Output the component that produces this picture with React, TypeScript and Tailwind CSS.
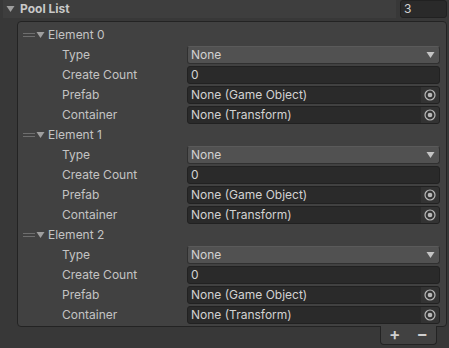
import React from 'react';

const font = { fontFamily: 'Inter, "Noto Sans", Arial, sans-serif' };

function Caret({ className }: { className?: string }) {
  return (
    <svg width="9" height="8" viewBox="0 0 9 8" className={className}>
      <path d="M0.5 1 L8.5 1 L4.5 7 Z" fill="currentColor" />
    </svg>
  );
}

function Handle() {
  return (
    <svg width="12" height="6" viewBox="0 0 12 6" className="text-[#6e6e6e]">
      <rect x="0" y="1" width="12" height="1" fill="currentColor" />
      <rect x="0" y="4" width="12" height="1" fill="currentColor" />
    </svg>
  );
}

function Target() {
  return (
    <svg width="12" height="12" viewBox="0 0 12 12" className="text-[#b8b8b8]">
      <circle cx="6" cy="6" r="5" fill="none" stroke="currentColor" strokeWidth="1.2" />
      <circle cx="6" cy="6" r="2.3" fill="currentColor" />
    </svg>
  );
}

function Dropdown({ value }: { value: string }) {
  return (
    <div className="flex-1 h-[18px] flex items-center justify-between rounded-[3px] border border-[#303030] border-t-[#5a5a5a] bg-[#515151] pl-[3px] pr-[4px] text-[#d2d2d2]">
      <span>{value}</span>
      <Caret className="text-[#c4c4c4]" />
    </div>
  );
}

function TextField({ value }: { value: string }) {
  return (
    <div className="flex-1 h-[18px] flex items-center rounded-[3px] border border-[#212121] bg-[#2a2a2a] pl-[3px] text-[#d2d2d2]">
      {value}
    </div>
  );
}

function ObjectField({ value }: { value: string }) {
  return (
    <div className="flex-1 h-[18px] flex items-center rounded-[3px] border border-[#212121] bg-[#2a2a2a] text-[#d2d2d2] overflow-hidden">
      <span className="flex-1 pl-[3px]">{value}</span>
      <div className="w-[18px] h-full flex items-center justify-center bg-[#333333]">
        <Target />
      </div>
    </div>
  );
}

function Prop({ label, children }: { label: string; children: React.ReactNode }) {
  return (
    <div className="h-5 flex items-center pr-[6px]">
      <span className="w-[125px] pl-[44px] box-content text-[#c4c4c4] shrink-0">{label}</span>
      {children}
    </div>
  );
}

function Element({ index }: { index: number }) {
  return (
    <div>
      <div className="h-5 flex items-center">
        <div className="ml-[5px] mr-[1px] flex items-center">
          <Handle />
        </div>
        <Caret className="text-[#9e9e9e]" />
        <span className="ml-[3px] text-[#c4c4c4]">Element {index}</span>
      </div>
      <Prop label="Type">
        <Dropdown value="None" />
      </Prop>
      <Prop label="Create Count">
        <TextField value="0" />
      </Prop>
      <Prop label="Prefab">
        <ObjectField value="None (Game Object)" />
      </Prop>
      <Prop label="Container">
        <ObjectField value="None (Transform)" />
      </Prop>
    </div>
  );
}

export default function App() {
  return (
    <div className="w-[449px] h-[348px] bg-[#383838] text-[12px] leading-none overflow-hidden" style={font}>
      <div className="h-[18px] flex items-center">
        <div className="flex-1 h-full ml-[3px] mr-[4px] bg-[#3e3e3e] flex items-center">
          <Caret className="ml-[3px] text-[#9e9e9e]" />
          <span className="ml-[5px] font-bold text-[#c8c8c8]">Pool List</span>
        </div>
        <div className="w-[47px] h-[18px] mr-[2px] flex items-center rounded-[3px] border border-[#212121] bg-[#2a2a2a] pl-[3px] text-[#d2d2d2]">
          3
        </div>
      </div>
      <div className="ml-[17px] mr-[2px] mt-[3px]">
        <div className="rounded-[4px] border border-[#232323] bg-[#414141] pt-[3px] pb-[1px]">
          {[0, 1, 2].map((i) => (
            <Element key={i} index={i} />
          ))}
        </div>
        <div className="flex justify-end pr-[10px]">
          <div className="w-[57px] h-[19px] -mt-[1px] flex items-center justify-around rounded-b-[4px] border border-t-0 border-[#232323] bg-[#414141] text-[#cfcfcf] text-[17px] font-semibold pb-[2px]">
            <span>+</span>
            <span>−</span>
          </div>
        </div>
      </div>
    </div>
  );
}
